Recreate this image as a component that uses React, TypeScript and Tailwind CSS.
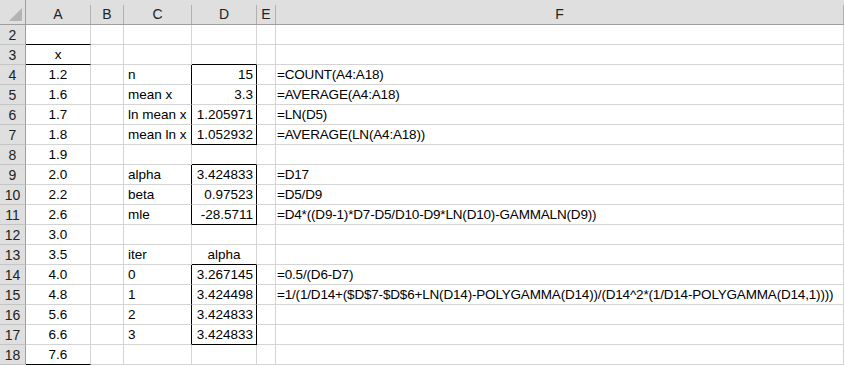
const colLetters = ["A", "B", "C", "D", "E", "F"];

type Row = { n: number; a?: string; c?: string; d?: string; f?: string };

const rows: Row[] = [
  { n: 2 },
  { n: 3, a: "x" },
  { n: 4, a: "1.2", c: "n", d: "15", f: "=COUNT(A4:A18)" },
  { n: 5, a: "1.6", c: "mean x", d: "3.3", f: "=AVERAGE(A4:A18)" },
  { n: 6, a: "1.7", c: "ln mean x", d: "1.205971", f: "=LN(D5)" },
  { n: 7, a: "1.8", c: "mean ln x", d: "1.052932", f: "=AVERAGE(LN(A4:A18))" },
  { n: 8, a: "1.9" },
  { n: 9, a: "2.0", c: "alpha", d: "3.424833", f: "=D17" },
  { n: 10, a: "2.2", c: "beta", d: "0.97523", f: "=D5/D9" },
  { n: 11, a: "2.6", c: "mle", d: "-28.5711", f: "=D4*((D9-1)*D7-D5/D10-D9*LN(D10)-GAMMALN(D9))" },
  { n: 12, a: "3.0" },
  { n: 13, a: "3.5", c: "iter", d: "alpha" },
  { n: 14, a: "4.0", c: "0", d: "3.267145", f: "=0.5/(D6-D7)" },
  {
    n: 15,
    a: "4.8",
    c: "1",
    d: "3.424498",
    f: "=1/(1/D14+($D$7-$D$6+LN(D14)-POLYGAMMA(D14))/(D14^2*(1/D14-POLYGAMMA(D14,1))))",
  },
  { n: 16, a: "5.6", c: "2", d: "3.424833" },
  { n: 17, a: "6.6", c: "3", d: "3.424833" },
  { n: 18, a: "7.6" },
];

// rows whose D cell sits inside a bordered box
const boxed = [4, 5, 6, 7, 9, 10, 11, 14, 15, 16, 17];
// rows whose D cell has a black bottom edge (top or bottom of a box)
const dBottom = [3, 7, 8, 11, 13, 17];
const aBottom = [2, 3, 18];

const grid = "border-r border-b border-[#d4d4d4]";

export default function App() {
  return (
    <div
      className="w-[845px] h-[366px] bg-white overflow-hidden text-black"
      style={{ fontFamily: "'Liberation Sans', Arial, sans-serif" }}
    >
      <div className="grid grid-cols-[26px_65px_33px_68px_65px_19px_568px] text-[13.5px] leading-none">
        {/* header row */}
        <div className="h-[25px] bg-[#dfdfdf] border-r border-b border-[#9f9f9f] flex items-end justify-end pr-[3px] pb-[3px]">
          <svg width="13" height="13" viewBox="0 0 13 13">
            <polygon points="13,0 13,13 0,13" fill="#b4b4b4" />
          </svg>
        </div>
        {colLetters.map((l) => (
          <div key={l} className="h-[25px] bg-[#dfdfdf] border-b border-[#9f9f9f] flex flex-col">
            <div className="mt-[5px] flex-1 border-r border-[#b0b0b0] flex items-center justify-center text-[#222] text-[14px] pb-[1px]">
              {l}
            </div>
          </div>
        ))}

        {rows.map((r) => {
          const inBox = boxed.includes(r.n);
          return (
            <div key={r.n} className="contents">
              <div className="h-[20px] bg-[#dfdfdf] border-r border-b border-r-[#9f9f9f] border-b-[#c4c4c4] flex items-center justify-center text-[#222] text-[14px]">
                {r.n}
              </div>
              <div
                className={`h-[20px] ${grid} flex items-center justify-center ${
                  aBottom.includes(r.n) ? "border-b-black" : ""
                }`}
              >
                {r.a}
              </div>
              <div className={`h-[20px] ${grid}`} />
              <div
                className={`h-[20px] ${grid} flex items-center pl-[4px] whitespace-nowrap ${
                  inBox ? "border-r-black" : ""
                }`}
              >
                {r.c}
              </div>
              <div
                className={`h-[20px] ${grid} flex items-center whitespace-nowrap ${
                  r.n === 13 ? "justify-center" : "justify-end pr-[3px]"
                } ${inBox ? "border-r-black" : ""} ${dBottom.includes(r.n) ? "border-b-black" : ""}`}
              >
                {r.d}
              </div>
              <div className={`h-[20px] ${grid}`} />
              <div className={`h-[20px] ${grid} flex items-center pl-[1px] whitespace-nowrap tracking-[-0.18px]`}>
                {r.f}
              </div>
            </div>
          );
        })}
      </div>
    </div>
  );
}
